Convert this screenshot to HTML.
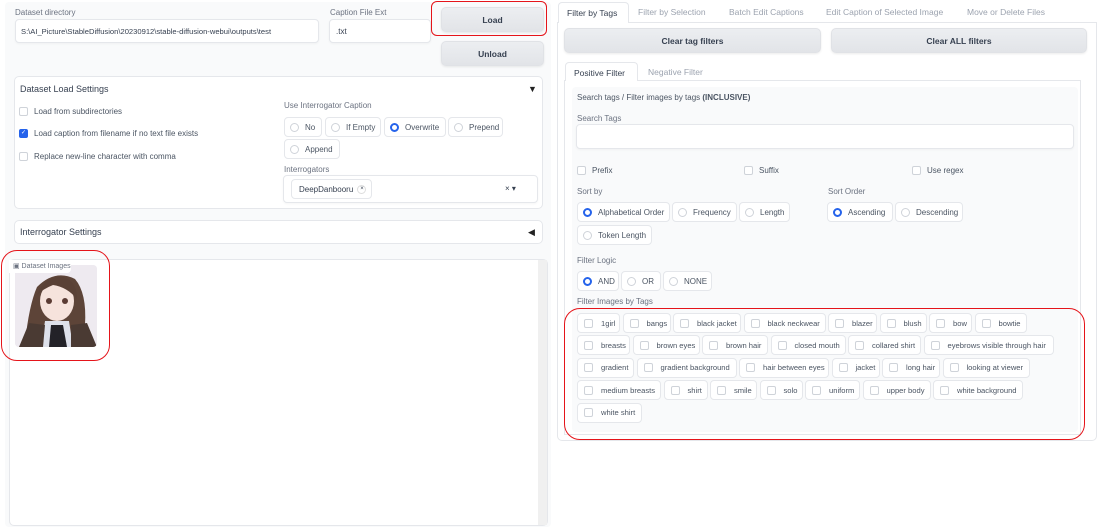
<!DOCTYPE html>
<html><head><meta charset="utf-8"><style>
*{box-sizing:border-box;margin:0;padding:0}
body{width:1105px;height:530px;background:#fff;font-family:"Liberation Sans",sans-serif;font-size:8px;color:#4b5563;position:relative;overflow:hidden}
.a{position:absolute;white-space:nowrap}
.lbl{color:#6b7280;font-size:8px}
.inp{background:#fff;border:1px solid #e5e7eb;border-radius:4px;box-shadow:0 1px 2px rgba(0,0,0,.04)}
.btn{background:linear-gradient(#eceef1,#e2e4e8);border:1px solid #e0e2e6;border-radius:5px;text-align:center;font-weight:bold;color:#374151;font-size:8.5px;box-shadow:0 1px 2px rgba(0,0,0,.08)}
.cb{display:inline-block;width:9px;height:9px;border:1px solid #cfd3d9;border-radius:2px;background:#fff;vertical-align:middle;flex:none}
.rad{position:absolute;display:flex;align-items:center;background:#fff;border:1px solid #e5e7eb;border-radius:4px;padding-left:5px;height:20px;color:#4b5563;white-space:nowrap}
.rad i{display:inline-block;width:9px;height:9px;border:1px solid #cfd3d9;border-radius:50%;margin-right:6px;background:#fff}
.rad i.on{border:2.5px solid #2563eb}
.tags{position:absolute;left:577px;top:313px;width:482px;display:flex;flex-wrap:wrap;gap:2.4px 2.5px}
.tag{height:20px;display:flex;align-items:center;background:#fff;border:1px solid #e5e7eb;border-radius:4px;padding-left:6px;color:#4b5563;white-space:nowrap;overflow:hidden;font-size:7.6px}
.tag .cb{margin-right:8px}
.red{position:absolute;border:1.3px solid #e5141a;pointer-events:none}
</style></head><body>
<!-- LEFT -->
<div class="a" style="left:5px;top:2px;width:546px;height:525px;background:#f9fafb;border-radius:4px"></div>
<div class="a lbl" style="left:15px;top:8px">Dataset directory</div>
<div class="a inp" style="left:15px;top:19px;width:304px;height:24px;padding:7px 5px;color:#374151;font-size:7.6px">S:\AI_Picture\StableDiffusion\20230912\stable-diffusion-webui\outputs\test</div>
<div class="a lbl" style="left:330px;top:8px">Caption File Ext</div>
<div class="a inp" style="left:329px;top:19px;width:102px;height:24px;padding:7px 6px;color:#374151">.txt</div>
<div class="a btn" style="left:441px;top:7px;width:103px;height:25px;line-height:24px">Load</div>
<div class="red" style="left:431px;top:1px;width:116px;height:35px;border-radius:6px"></div>
<div class="a btn" style="left:441px;top:41px;width:103px;height:25px;line-height:24px">Unload</div>

<div class="a" style="left:14px;top:76px;width:529px;height:133px;background:#fff;border:1px solid #e5e7eb;border-radius:5px"></div>
<div class="a" style="left:20px;top:84px;font-size:9px;color:#374151">Dataset Load Settings</div>
<div class="a" style="left:528px;top:84px;font-size:9px;color:#222">&#9660;</div>
<div class="a" style="left:19px;top:107px"><span class="cb"></span><span style="margin-left:6px">Load from subdirectories</span></div>
<div class="a" style="left:19px;top:129px"><span class="cb" style="background:#2563eb;border-color:#2563eb;color:#fff;font-size:6px;line-height:7px;text-align:center">&#10003;</span><span style="margin-left:6px">Load caption from filename if no text file exists</span></div>
<div class="a" style="left:19px;top:152px"><span class="cb"></span><span style="margin-left:6px">Replace new-line character with comma</span></div>
<div class="a lbl" style="left:284px;top:101px">Use Interrogator Caption</div>
<div class="rad" style="left:284px;top:117px;width:38px"><i></i>No</div>
<div class="rad" style="left:325px;top:117px;width:56px"><i></i>If Empty</div>
<div class="rad" style="left:384px;top:117px;width:62px"><i class="on"></i>Overwrite</div>
<div class="rad" style="left:448px;top:117px;width:55px"><i></i>Prepend</div>
<div class="rad" style="left:284px;top:139px;width:56px"><i></i>Append</div>
<div class="a lbl" style="left:284px;top:165px">Interrogators</div>
<div class="a inp" style="left:283px;top:175px;width:255px;height:28px"></div>
<div class="a" style="left:291px;top:179px;width:81px;height:20px;border:1px solid #e5e7eb;border-radius:4px;background:#fff;padding:5px 7px;color:#374151">DeepDanbooru <span style="display:inline-block;width:9px;height:9px;border-radius:50%;border:1px solid #ddd;font-size:6px;text-align:center;line-height:7px;margin-left:2px;vertical-align:middle">×</span></div>
<div class="a" style="left:505px;top:184px;color:#374151">× ▾</div>

<div class="a" style="left:14px;top:220px;width:529px;height:24px;background:#fff;border:1px solid #e5e7eb;border-radius:5px"></div>
<div class="a" style="left:20px;top:227px;font-size:9px;color:#374151">Interrogator Settings</div>
<div class="a" style="left:528px;top:227px;font-size:9px;color:#222">&#9664;</div>

<div class="a" style="left:9px;top:259px;width:539px;height:267px;background:#fff;border:1px solid #e5e7eb;border-radius:5px"></div>
<div class="a" style="left:538px;top:260px;width:9px;height:265px;background:#f0f0f0"></div>
<div class="a" style="left:15px;top:265px;width:82px;height:82px;border-radius:4px;overflow:hidden;background:#f3f1f5">
<svg width="82" height="82" viewBox="0 0 82 82">
<rect width="82" height="82" fill="#eeeaf0"/>
<path d="M10 78 Q14 40 22 22 Q40 4 60 14 Q72 28 70 60 L78 82 L4 82Z" fill="#5d4438"/>
<ellipse cx="42" cy="36" rx="17" ry="20" fill="#f6e3dc"/>
<path d="M22 30 Q30 10 48 12 Q62 16 62 34 Q52 22 38 20 Q28 24 22 30Z" fill="#5a4136"/>
<circle cx="34" cy="36" r="3" fill="#5b3b33"/><circle cx="50" cy="36" r="3" fill="#5b3b33"/>
<path d="M30 56 L54 56 L58 82 L26 82Z" fill="#dde0ea"/>
<path d="M36 60 L48 60 L52 82 L34 82Z" fill="#232228"/>
<path d="M4 82 L14 58 L30 60 L28 82Z M56 60 L72 58 L82 82 L56 82Z" fill="#4a3a33"/>
</svg></div>
<div class="a" style="left:9px;top:260px;width:62px;height:13px;background:#fff;border-radius:0 0 4px 0;padding:3px 4px;color:#6b7280;font-size:7px;line-height:7px">▣ Dataset Images</div>
<div class="red" style="left:1px;top:250px;width:109px;height:111px;border-radius:16px"></div>

<!-- RIGHT -->
<div class="a" style="left:557px;top:22px;width:540px;height:419px;border:1px solid #e5e7eb;border-radius:0 0 5px 5px"></div>
<div class="a" style="left:558px;top:2px;width:71px;height:21px;background:#fff;border:1px solid #e5e7eb;border-bottom:none;border-radius:4px 4px 0 0;padding:5px 8px;font-size:8.5px;color:#374151">Filter by Tags</div>
<div class="a lbl" style="left:638px;top:7px;font-size:8.5px;color:#9ca3af">Filter by Selection</div>
<div class="a lbl" style="left:729px;top:7px;font-size:8.5px;color:#9ca3af">Batch Edit Captions</div>
<div class="a lbl" style="left:826px;top:7px;font-size:8.5px;color:#9ca3af">Edit Caption of Selected Image</div>
<div class="a lbl" style="left:967px;top:7px;font-size:8.5px;color:#9ca3af">Move or Delete Files</div>
<div class="a btn" style="left:564px;top:28px;width:257px;height:25px;line-height:24px">Clear tag filters</div>
<div class="a btn" style="left:831px;top:28px;width:256px;height:25px;line-height:24px">Clear ALL filters</div>

<div class="a" style="left:564px;top:80px;width:517px;height:355px;border:1px solid #e5e7eb"></div>
<div class="a" style="left:565px;top:62px;width:73px;height:19px;background:#fff;border:1px solid #e5e7eb;border-bottom:none;border-radius:4px 4px 0 0;padding:5px 8px;color:#374151;font-size:8.5px">Positive Filter</div>
<div class="a" style="left:648px;top:67px;color:#9ca3af;font-size:8.5px">Negative Filter</div>
<div class="a" style="left:572px;top:87px;width:506px;height:345px;background:#f9fafb;border-radius:4px"></div>
<div class="a" style="left:577px;top:93px;color:#4b5563">Search tags / Filter images by tags <b>(INCLUSIVE)</b></div>
<div class="a lbl" style="left:577px;top:114px">Search Tags</div>
<div class="a inp" style="left:576px;top:124px;width:498px;height:25px"></div>
<div class="a" style="left:577px;top:166px"><span class="cb"></span><span style="margin-left:6px">Prefix</span></div>
<div class="a" style="left:744px;top:166px"><span class="cb"></span><span style="margin-left:6px">Suffix</span></div>
<div class="a" style="left:912px;top:166px"><span class="cb"></span><span style="margin-left:6px">Use regex</span></div>
<div class="a lbl" style="left:577px;top:187px">Sort by</div>
<div class="a lbl" style="left:828px;top:187px">Sort Order</div>
<div class="rad" style="left:577px;top:202px;width:93px"><i class="on"></i>Alphabetical Order</div>
<div class="rad" style="left:672px;top:202px;width:65px"><i></i>Frequency</div>
<div class="rad" style="left:739px;top:202px;width:51px"><i></i>Length</div>
<div class="rad" style="left:827px;top:202px;width:66px"><i class="on"></i>Ascending</div>
<div class="rad" style="left:895px;top:202px;width:68px"><i></i>Descending</div>
<div class="rad" style="left:577px;top:225px;width:75px"><i></i>Token Length</div>
<div class="a lbl" style="left:577px;top:256px">Filter Logic</div>
<div class="rad" style="left:577px;top:271px;width:42px"><i class="on"></i>AND</div>
<div class="rad" style="left:621px;top:271px;width:40px"><i></i>OR</div>
<div class="rad" style="left:663px;top:271px;width:49px"><i></i>NONE</div>
<div class="a lbl" style="left:577px;top:297px">Filter Images by Tags</div>
<div class="tags">
<div class="tag" style="width:43px"><span class="cb"></span>1girl</div>
<div class="tag" style="width:48px"><span class="cb"></span>bangs</div>
<div class="tag" style="width:68px"><span class="cb"></span>black jacket</div>
<div class="tag" style="width:82px"><span class="cb"></span>black neckwear</div>
<div class="tag" style="width:49px"><span class="cb"></span>blazer</div>
<div class="tag" style="width:47px"><span class="cb"></span>blush</div>
<div class="tag" style="width:43px"><span class="cb"></span>bow</div>
<div class="tag" style="width:52px"><span class="cb"></span>bowtie</div>
<div class="tag" style="width:53px"><span class="cb"></span>breasts</div>
<div class="tag" style="width:67px"><span class="cb"></span>brown eyes</div>
<div class="tag" style="width:66px"><span class="cb"></span>brown hair</div>
<div class="tag" style="width:75px"><span class="cb"></span>closed mouth</div>
<div class="tag" style="width:73px"><span class="cb"></span>collared shirt</div>
<div class="tag" style="width:130px"><span class="cb"></span>eyebrows visible through hair</div>
<div class="tag" style="width:57px"><span class="cb"></span>gradient</div>
<div class="tag" style="width:100px"><span class="cb"></span>gradient background</div>
<div class="tag" style="width:90px"><span class="cb"></span>hair between eyes</div>
<div class="tag" style="width:48px"><span class="cb"></span>jacket</div>
<div class="tag" style="width:58px"><span class="cb"></span>long hair</div>
<div class="tag" style="width:87px"><span class="cb"></span>looking at viewer</div>
<div class="tag" style="width:84px"><span class="cb"></span>medium breasts</div>
<div class="tag" style="width:44px"><span class="cb"></span>shirt</div>
<div class="tag" style="width:47px"><span class="cb"></span>smile</div>
<div class="tag" style="width:43px"><span class="cb"></span>solo</div>
<div class="tag" style="width:55px"><span class="cb"></span>uniform</div>
<div class="tag" style="width:68px"><span class="cb"></span>upper body</div>
<div class="tag" style="width:90px"><span class="cb"></span>white background</div>
<div class="tag" style="width:65px"><span class="cb"></span>white shirt</div>
</div>
<div class="red" style="left:564px;top:308px;width:521px;height:132px;border-radius:16px"></div>
</body></html>
